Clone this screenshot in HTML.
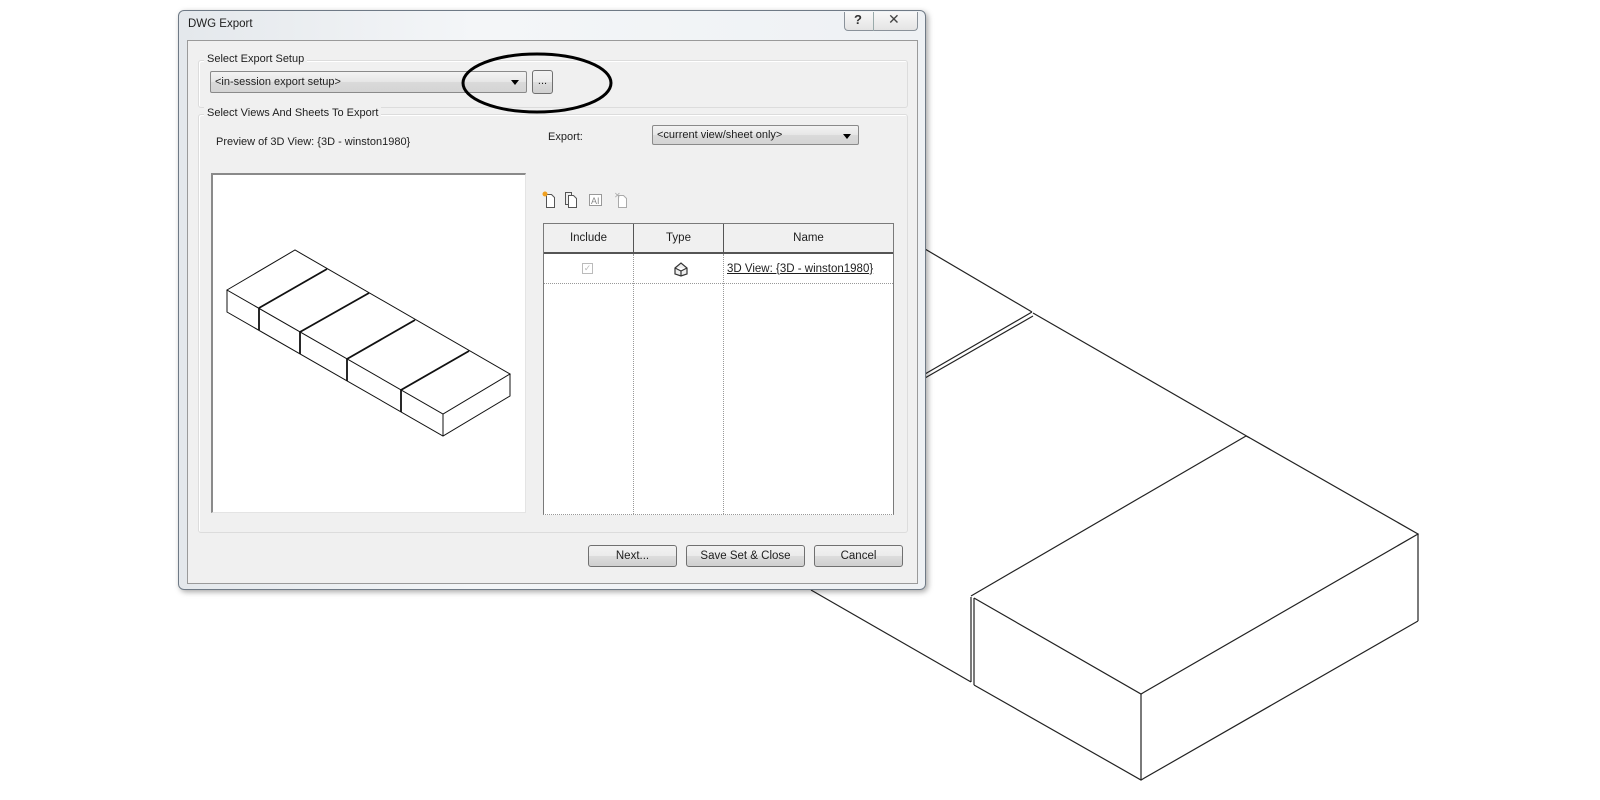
<!DOCTYPE html>
<html><head><meta charset="utf-8"><style>
*{box-sizing:border-box;margin:0;padding:0}
body{width:1600px;height:800px;background:#fff;position:relative;overflow:hidden;font-family:"Liberation Sans",sans-serif;font-size:11.5px;color:#1e1e1e}
.a{position:absolute}
.btn{position:absolute;border:1px solid #707070;border-radius:3px;background:linear-gradient(#f2f2f2,#ebebeb 50%,#dddddd 51%,#cfcfcf);text-align:center;line-height:20px;font-size:11.5px}
.combo{position:absolute;border:1px solid #8a8a8a;border-radius:2px;background:linear-gradient(#f3f3f3,#e6e6e6 50%,#dadada 51%,#d4d4d4);padding-left:4px;line-height:19px;font-size:11px}
.combo:after{content:"";position:absolute;right:7px;top:8px;border-left:4px solid transparent;border-right:4px solid transparent;border-top:5px solid #000}
.grp{position:absolute;border:1px solid #dcdcdc;border-radius:3px;box-shadow:inset 1px 1px 0 #fff}
.lbl{position:absolute;background:#f0f0f0;padding:0 3px;font-size:11px}
</style></head><body>

<svg class="a" style="left:0;top:0" width="1600" height="800">
<g stroke="#222" stroke-width="1.2" fill="none">
<polyline points="974,598 1141,694 1418,534 1250,438"/>
<line x1="1141" y1="694" x2="1141" y2="780"/>
<line x1="1418" y1="534" x2="1418" y2="621"/>
<line x1="974" y1="598" x2="974" y2="685"/>
<polyline points="974,685 1141,780 1418,621"/>
<line x1="971" y1="596" x2="1246" y2="436"/>
<line x1="971" y1="682" x2="971" y2="597"/>
<line x1="971" y1="682" x2="811" y2="590"/>
<line x1="1033" y1="313" x2="1250" y2="438"/>
<line x1="1246" y1="436" x2="1250" y2="438"/>
<line x1="925" y1="374" x2="1032" y2="312"/>
<line x1="925" y1="378" x2="1033" y2="316"/>
<line x1="925" y1="249" x2="1032" y2="312"/>
</g>
</svg>

<div class="a" style="left:178px;top:10px;width:748px;height:580px;border:1px solid #6f7a86;border-radius:6px;background:linear-gradient(90deg,#e4e8ec,#f4f6f8 40%,#eef1f4);box-shadow:2px 2px 6px rgba(0,0,0,.35)"></div>
<div class="a" style="left:188px;top:18px;font-size:11.5px">DWG Export</div>
<div class="a" style="left:844px;top:12px;width:74px;height:19px;border:1px solid #8a929a;border-top:none;border-radius:0 0 4px 4px;background:linear-gradient(#f8f8f8,#e4e4e4)"></div>
<div class="a" style="left:873px;top:12px;width:1px;height:19px;background:#9aa"></div>
<div class="a" style="left:854px;top:12px;font-size:13px;font-weight:bold;color:#333">?</div>
<div class="a" style="left:888px;top:11px;font-size:14px;color:#444">✕</div>
<div class="a" style="left:187px;top:40px;width:731px;height:544px;border:1px solid #9a9a9a;background:#f0f0f0"></div>

<div class="grp" style="left:198px;top:60px;width:710px;height:48px"></div>
<div class="lbl" style="left:204px;top:53px">Select Export Setup</div>
<div class="combo" style="left:210px;top:71px;width:317px;height:22px;line-height:20px">&lt;in-session export setup&gt;</div>
<div class="btn" style="left:532px;top:70px;width:21px;height:24px;line-height:20px;font-size:11px">...</div>

<div class="grp" style="left:198px;top:114px;width:710px;height:419px"></div>
<div class="lbl" style="left:204px;top:107px">Select Views And Sheets To Export</div>
<div class="a" style="left:216px;top:136px;font-size:11px">Preview of 3D View: {3D - winston1980}</div>
<div class="a" style="left:548px;top:131px;font-size:11px">Export:</div>
<div class="combo" style="left:652px;top:125px;width:207px;height:20px;line-height:18px">&lt;current view/sheet only&gt;</div>

<div class="a" style="left:211px;top:173px;width:315px;height:340px;background:#fff;border-left:2px solid #8a8a8a;border-top:2px solid #8a8a8a;border-right:1px solid #e4e4e4;border-bottom:1px solid #e4e4e4"></div>
<svg class="a" style="left:0;top:0" width="600" height="600">
<g stroke="#111" stroke-width="1" fill="none">
<polygon points="227,290 295,250 510,374 443,414"/>
<polyline points="227,290 227,312 443,436 510,396 510,374"/>
<line x1="443" y1="414" x2="443" y2="436"/>
<g stroke-width="1.8">
<line x1="259" y1="308" x2="327" y2="269"/><line x1="259" y1="308" x2="259" y2="330"/>
<line x1="300" y1="332" x2="369" y2="293"/><line x1="300" y1="332" x2="300" y2="354"/>
<line x1="347" y1="359" x2="415" y2="320"/><line x1="347" y1="359" x2="347" y2="381"/>
<line x1="401" y1="390" x2="469" y2="351"/><line x1="401" y1="390" x2="401" y2="412"/>
</g>
</g>
</svg>

<svg class="a" style="left:540px;top:190px" width="100" height="20">
<g fill="#fff" stroke="#555" stroke-width="1">
<path d="M6.5 4.5h5l3 3v10h-8z"/>
<circle cx="5" cy="4" r="2.5" fill="#f0a020" stroke="none"/>
<path d="M25.5 2.5h6v12h-6z" fill="#eee"/><path d="M28.5 5.5h5l3 3v9h-8z"/>
<rect x="49.5" y="4.5" width="12" height="11" stroke="#999"/>
<path d="M78.5 5.5h5l3 3v9h-8z" stroke="#aaa"/>
</g>
<text x="51" y="14" font-size="9" fill="#888" font-family="Liberation Sans">AI</text>
<text x="74" y="8" font-size="8" fill="#aaa" font-family="Liberation Sans">✕</text>
</svg>

<div class="a" style="left:543px;top:223px;width:351px;height:292px;background:#fff;border:1px solid #7a7a7a;border-bottom:1px dotted #999"></div>
<div class="a" style="left:544px;top:224px;width:349px;height:30px;background:#f0f0f0;border-bottom:2px solid #555"></div>
<div class="a" style="left:633px;top:224px;width:1px;height:30px;background:#555"></div>
<div class="a" style="left:723px;top:224px;width:1px;height:30px;background:#555"></div>
<div class="a" style="left:633px;top:254px;width:0;height:260px;border-left:1px dotted #999"></div>
<div class="a" style="left:723px;top:254px;width:0;height:260px;border-left:1px dotted #999"></div>
<div class="a" style="left:544px;top:283px;width:349px;height:0;border-top:1px dotted #999"></div>
<div class="a" style="left:544px;top:232px;width:89px;text-align:center">Include</div>
<div class="a" style="left:634px;top:232px;width:89px;text-align:center">Type</div>
<div class="a" style="left:724px;top:232px;width:169px;text-align:center">Name</div>
<div class="a" style="left:582px;top:263px;width:11px;height:11px;border:1px solid #bbb;color:#bbb;font-size:9px;line-height:9px;text-align:center">✓</div>
<svg class="a" style="left:673px;top:261px" width="16" height="16"><path d="M2 7l6-5 6 5v6l-6 2-6-2z M2 7l6 3 6-3 M8 10v5" fill="#eee" stroke="#333" stroke-width="1.2"/></svg>
<div class="a" style="left:727px;top:263px;text-decoration:underline">3D View: {3D - winston1980}</div>

<div class="btn" style="left:588px;top:545px;width:89px;height:22px">Next...</div>
<div class="btn" style="left:686px;top:545px;width:119px;height:22px">Save Set &amp; Close</div>
<div class="btn" style="left:814px;top:545px;width:89px;height:22px">Cancel</div>

<svg class="a" style="left:0;top:0" width="700" height="200"><ellipse cx="537" cy="83" rx="74" ry="29" fill="none" stroke="#000" stroke-width="3"/></svg>
</body></html>
